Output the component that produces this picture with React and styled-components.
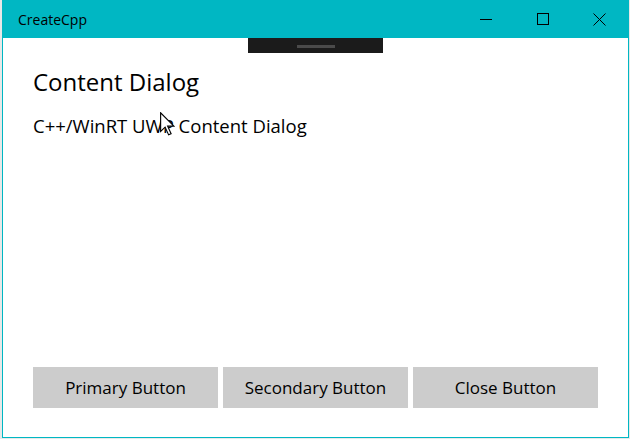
import React from 'react';
import styled, {createGlobalStyle} from 'styled-components';

const GlobalStyle = createGlobalStyle`
  html, body {
    margin: 0;
    padding: 0;
    background: #e8e8e8;
  }
  body {
    font-family: "Open Sans", "Noto Sans", "Liberation Sans", sans-serif;
  }
`;

const Page = styled.div`
  width: 630px;
  height: 439px;
  padding-left: 2px;
  box-sizing: border-box;
  display: flex;
`;

const Window = styled.div`
  width: 627px;
  height: 438px;
  box-sizing: border-box;
  border: 1px solid #00b7c3;
  border-top: none;
  background: #ffffff;
  display: flex;
  flex-direction: column;
  position: relative;
`;

const TitleBar = styled.div`
  height: 38px;
  background: #00b7c3;
  display: flex;
  align-items: center;
  flex-shrink: 0;
`;

const Title = styled.div`
  flex: 1;
  padding-left: 15px;
  font-size: 14px;
  color: #000;
`;

const CaptionButton = styled.div`
  width: 57px;
  height: 38px;
  display: flex;
  align-items: center;
  justify-content: center;
`;

const Dialog = styled.div`
  flex: 1;
  display: flex;
  flex-direction: column;
  padding: 0 30px 29px 30px;
`;

const Handle = styled.div`
  align-self: center;
  width: 135px;
  height: 15px;
  background: #1b1b1b;
  display: flex;
  justify-content: center;
  padding-top: 7px;
  box-sizing: border-box;
`;

const Grip = styled.div`
  width: 38px;
  height: 3px;
  background: #4a4a4a;
`;

const Heading = styled.h1`
  margin: 13px 0 0 0;
  font-size: 24px;
  line-height: 32px;
  font-weight: 400;
  color: #000;
`;

const Body = styled.p`
  margin: 16px 0 0 0;
  font-size: 18.5px;
  line-height: 24px;
  color: #000;
  flex: 1;
`;

const ButtonRow = styled.div`
  display: grid;
  grid-template-columns: 1fr 1fr 1fr;
  gap: 5px;
`;

const Button = styled.div`
  height: 41px;
  background: #cccccc;
  display: flex;
  align-items: center;
  justify-content: center;
  font-size: 17px;
  color: #000;
`;

const Cursor = styled.svg`
  position: absolute;
  left: 157px;
  top: 112px;
`;

export default function App() {
  return (
    <>
      <GlobalStyle />
      <Page>
        <Window>
          <TitleBar>
            <Title>CreateCpp</Title>
            <CaptionButton>
              <svg width="12" height="12" viewBox="0 0 12 12">
                <path d="M0 6.5h12" stroke="#000" strokeWidth="1" />
              </svg>
            </CaptionButton>
            <CaptionButton>
              <svg width="12" height="12" viewBox="0 0 12 12">
                <rect x="0.5" y="0.5" width="11" height="11" fill="none" stroke="#000" strokeWidth="1" />
              </svg>
            </CaptionButton>
            <CaptionButton>
              <svg width="13" height="13" viewBox="0 0 13 13">
                <path d="M0.5 0.5l12 12M12.5 0.5l-12 12" stroke="#000" strokeWidth="1" />
              </svg>
            </CaptionButton>
          </TitleBar>
          <Dialog>
            <Handle>
              <Grip />
            </Handle>
            <Heading>Content Dialog</Heading>
            <Body>C++/WinRT UWP Content Dialog</Body>
            <ButtonRow>
              <Button>Primary Button</Button>
              <Button>Secondary Button</Button>
              <Button>Close Button</Button>
            </ButtonRow>
          </Dialog>
          <Cursor width="15" height="24" viewBox="0 0 12 19">
            <path d="M0.5 0.5v15l3.6-3.5 2.8 6.2 2-0.9-2.8-6.1h5z" fill="#fff" stroke="#000" strokeWidth="0.9" />
          </Cursor>
        </Window>
      </Page>
    </>
  );
}
